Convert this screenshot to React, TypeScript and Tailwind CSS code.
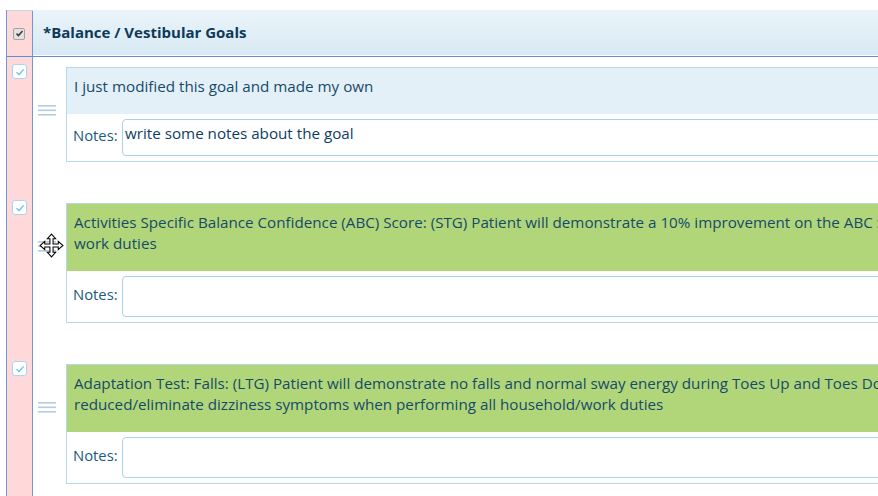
import type { ReactNode } from "react";

type Goal = {
  id: string;
  lines: string[];
  tone: "blue" | "green";
  note?: string;
  inputHeight: string;
  dragging?: boolean;
};

const GOALS: Goal[] = [
  {
    id: "custom",
    lines: ["I just modified this goal and made my own"],
    tone: "blue",
    note: "write some notes about the goal",
    inputHeight: "h-[37px]",
  },
  {
    id: "abc",
    lines: [
      "Activities Specific Balance Confidence (ABC) Score: (STG) Patient will demonstrate a 10% improvement on the ABC Score to return to all household/",
      "work duties",
    ],
    tone: "green",
    inputHeight: "h-[41px]",
    dragging: true,
  },
  {
    id: "adaptation",
    lines: [
      "Adaptation Test: Falls: (LTG) Patient will demonstrate no falls and normal sway energy during Toes Up and Toes Down conditions with",
      "reduced/eliminate dizziness symptoms when performing all household/work duties",
    ],
    tone: "green",
    inputHeight: "h-[41px]",
  },
];

function HeaderCheckbox() {
  return (
    <span className="flex h-[12px] w-[12px] items-center justify-center rounded-[2px] border border-[#a3a3a3] bg-[#e2e2e2]">
      <svg viewBox="0 0 12 12" className="h-[9px] w-[9px]">
        <path d="M2 6.2 L4.6 8.8 L10 2.6" fill="none" stroke="#3a3a3a" strokeWidth="2" />
      </svg>
    </span>
  );
}

function RowCheckbox() {
  return (
    <span className="flex h-[15px] w-[15px] items-center justify-center rounded-[3px] border border-[#a9d5f1] bg-white">
      <svg viewBox="0 0 12 12" className="h-[10px] w-[10px]">
        <path d="M1.8 6.2 L4.8 9 L10.4 2.8" fill="none" stroke="#69bdee" strokeWidth="1.5" />
      </svg>
    </span>
  );
}

function DragHandle() {
  return (
    <svg viewBox="0 0 18 11" className="h-[11px] w-[18px]">
      <rect x="0" y="0" width="18" height="1.6" fill="#b3cbe3" />
      <rect x="0" y="4.5" width="18" height="1.6" fill="#b3cbe3" />
      <rect x="0" y="9" width="18" height="1.6" fill="#b3cbe3" />
    </svg>
  );
}

function MoveCursor() {
  return (
    <svg viewBox="0 0 24 24" className="h-[25px] w-[25px]">
      <path
        d="M12 1 L16 5.5 L13.5 5.5 L13.5 10.5 L18.5 10.5 L18.5 8 L23 12 L18.5 16 L18.5 13.5 L13.5 13.5 L13.5 18.5 L16 18.5 L12 23 L8 18.5 L10.5 18.5 L10.5 13.5 L5.5 13.5 L5.5 16 L1 12 L5.5 8 L5.5 10.5 L10.5 10.5 L10.5 5.5 L8 5.5 Z"
        fill="white"
        stroke="black"
        strokeWidth="1"
      />
    </svg>
  );
}

function Row({ children }: { children: ReactNode }) {
  return (
    <div className="flex pt-[10px]">
      <div className="-mt-[10px] w-[26px] shrink-0 border-r border-[#6d9ad6] bg-[#ffd9d9] pl-[5px] pt-[7px]">
        <RowCheckbox />
      </div>
      {children}
    </div>
  );
}

function GoalCard({ goal }: { goal: Goal }) {
  const headerBg = goal.tone === "green" ? "bg-[#b1d679]" : "bg-[#e4f0f7]";
  return (
    <div className="flex flex-1 pb-[31px]">
      <div className="relative w-[33px] shrink-0 pl-[5px] pt-[38px]">
        <DragHandle />
        {goal.dragging && (
          <div className="absolute left-[6px] top-[30px]">
            <MoveCursor />
          </div>
        )}
      </div>
      <div className="flex-1 border border-[#b5d8ea]">
        <div className={`${headerBg} overflow-hidden pb-[17px] pl-[7px] pt-[8px] text-[15.2px] leading-[21px] text-[#164a69]`}>
          {goal.lines.map((line) => (
            <div key={line} className="whitespace-nowrap">
              {line}
            </div>
          ))}
        </div>
        <div className="flex items-center gap-[4px] bg-white py-[5px] pl-[6px]">
          <span className="w-[45px] -translate-y-[2px] text-[14.8px] text-[#1b5a7c]">Notes:</span>
          <div
            className={`${goal.inputHeight} flex-1 rounded-[4px] border border-[#a9d3e6] px-[2px] pt-[3px] text-[15.2px] leading-[20px] text-[#0e3d63]`}
          >
            {goal.note ?? ""}
          </div>
        </div>
      </div>
    </div>
  );
}

export default function App() {
  return (
    <div className="h-[496px] w-[878px] overflow-hidden bg-white font-['Open_Sans','Noto_Sans',sans-serif]">
      <div className="ml-[6px] mt-[10px] min-h-[486px] w-[1100px] border-l border-[#6d9ad6]">
        <div className="flex h-[47px] border-b border-t border-b-[#5d8fd2] border-t-[#c3dbe9]">
          <div className="flex w-[26px] shrink-0 items-center justify-center border-r border-[#6d9ad6] bg-[#ffd9d9] pr-[1px]">
            <HeaderCheckbox />
          </div>
          <div className="flex flex-1 -translate-y-[1px] items-center bg-gradient-to-b from-[#ebf4fa] to-[#d8e9f3] pl-[10px] text-[15px] font-bold text-[#0d3a5a]">
            *Balance / Vestibular Goals
          </div>
        </div>
        {GOALS.map((goal) => (
          <Row key={goal.id}>
            <GoalCard goal={goal} />
          </Row>
        ))}
        <div className="flex h-[40px]">
          <div className="w-[26px] border-r border-[#6d9ad6] bg-[#ffd9d9]" />
        </div>
      </div>
    </div>
  );
}
